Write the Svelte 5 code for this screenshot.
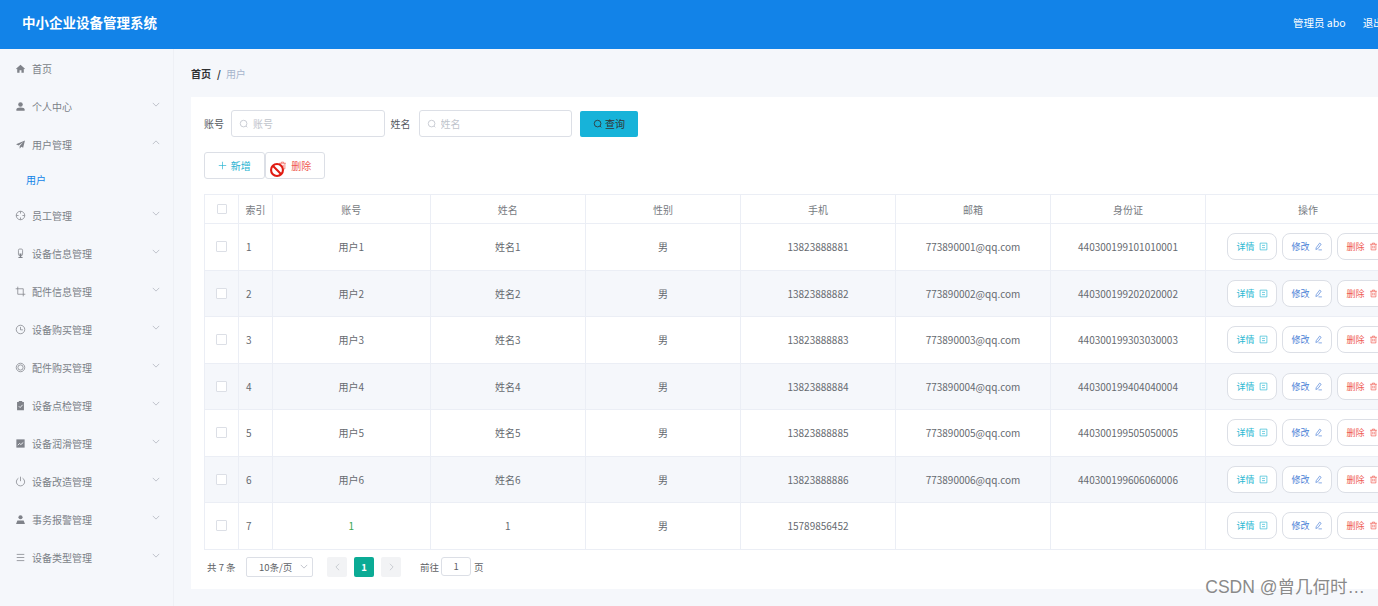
<script lang="ts">
  const menus = [
    { label: "首页", icon: "home" },
    { label: "个人中心", icon: "user", arrow: "down" },
    { label: "用户管理", icon: "plane", arrow: "up", children: ["用户"] },
    { label: "员工管理", icon: "aim", arrow: "down" },
    { label: "设备信息管理", icon: "mic", arrow: "down" },
    { label: "配件信息管理", icon: "crop", arrow: "down" },
    { label: "设备购买管理", icon: "clock", arrow: "down" },
    { label: "配件购买管理", icon: "ring", arrow: "down" },
    { label: "设备点检管理", icon: "clipboard", arrow: "down" },
    { label: "设备润滑管理", icon: "chart", arrow: "down" },
    { label: "设备改造管理", icon: "power", arrow: "down" },
    { label: "事务报警管理", icon: "person", arrow: "down" },
    { label: "设备类型管理", icon: "list", arrow: "down" },
  ];

  const users = [
    { id: 1, account: "用户1", name: "姓名1", phone: "13823888881", email: "773890001@qq.com", card: "440300199101010001" },
    { id: 2, account: "用户2", name: "姓名2", phone: "13823888882", email: "773890002@qq.com", card: "440300199202020002" },
    { id: 3, account: "用户3", name: "姓名3", phone: "13823888883", email: "773890003@qq.com", card: "440300199303030003" },
    { id: 4, account: "用户4", name: "姓名4", phone: "13823888884", email: "773890004@qq.com", card: "440300199404040004" },
    { id: 5, account: "用户5", name: "姓名5", phone: "13823888885", email: "773890005@qq.com", card: "440300199505050005" },
    { id: 6, account: "用户6", name: "姓名6", phone: "13823888886", email: "773890006@qq.com", card: "440300199606060006" },
    { id: 7, account: "1", name: "1", phone: "15789856452", email: "", card: "" },
  ];
</script>

{#snippet menuIcon(name)}
  <svg class="menu-icon" viewBox="0 0 16 16" aria-hidden="true">
    {#if name === "home"}
      <path class="fill" d="M8 2.5 1.5 8.2l.7.8 1-.8V14h3.4v-3.6h2.8V14h3.4V8.2l1 .8.7-.8z" />
    {:else if name === "user"}
      <circle class="fill" cx="8" cy="5" r="3.3" />
      <path class="fill" d="M2 14v-1.5C2 10.5 4 9.3 8 9.3s6 1.200 6 3.200V14z" />
    {:else if name === "plane"}
      <path class="fill" d="M14.500 2 1.500 7.500l3.700 1.800L12 4.500 6.800 10.300V14l2.400-2.700 2.600 1.300z" />
    {:else if name === "aim"}
      <circle class="line" cx="8" cy="8" r="6.200" />
      <path class="line" d="M8 1.800v3.400M8 10.800v3.400M1.800 8h3.400M10.800 8h3.400" />
    {:else if name === "mic"}
      <rect class="line" x="5" y="1.500" width="6" height="9.500" rx="1.800" />
      <path class="fill" d="M6.500 8h3v3h-3zM7 11h2v2H7zM5 13h6v1.500H5z" />
    {:else if name === "crop"}
      <path class="line" d="M4 1v11h11M1 4h11v11" />
    {:else if name === "clock"}
      <circle class="line" cx="8" cy="8" r="6.200" />
      <path class="line" d="M8 4.200V8.500h3.500" />
    {:else if name === "ring"}
      <circle class="line" cx="8" cy="8" r="6.200" />
      <circle class="line" cx="8" cy="8" r="3.800" />
    {:else if name === "clipboard"}
      <path class="fill" d="M5.500 1.500h5V3H13v12H3V3h2.500z" />
      <path class="check" d="m5.500 9 2 2 3.500-4" />
    {:else if name === "chart"}
      <rect class="fill" x="2" y="2" width="12" height="12" />
      <path class="check" d="m4 10.500 2.500-2.500 2 1.500L12 6.500" />
    {:else if name === "power"}
      <path class="line" d="M5 3.200a6 6 0 1 0 6 0M8 1v6.500" />
    {:else if name === "person"}
      <circle class="fill" cx="8" cy="4.800" r="3" />
      <path class="fill" d="M1.500 14.500 3.500 9.500h9l2 5z" />
    {:else if name === "list"}
      <path class="line" d="M2.500 3.500h11M2.500 8h11M2.500 12.500h11" />
    {/if}
  </svg>
{/snippet}

{#snippet chevron(dir)}
  <svg class="chevron" class:up={dir === "up"} viewBox="0 0 10 6" aria-hidden="true">
    <path d="m1 1 4 4 4-4" />
  </svg>
{/snippet}

{#snippet search()}
  <svg class="search-icon" viewBox="0 0 12 12" aria-hidden="true">
    <circle cx="5.500" cy="5.500" r="4" />
    <path d="m8.500 8.500 1.500 1.500" />
  </svg>
{/snippet}

{#snippet trash()}
  <svg class="btn-icon" viewBox="0 0 12 12" aria-hidden="true">
    <path d="M1.500 3h9M4.500 3V1.500h3V3M2.800 3v7.500h6.400V3M5 5v3.500M7 5v3.500" />
  </svg>
{/snippet}

<div class="app">
  <header class="topbar">
    <h1>中小企业设备管理系统</h1>
    <div class="account">
      <span>管理员 abo</span>
      <span class="logout">退出登录</span>
    </div>
  </header>

  <div class="body">
    <nav class="sidebar">
      {#each menus as item}
        <div class="menu-item">
          {@render menuIcon(item.icon)}
          <span>{item.label}</span>
          {#if item.arrow}
            {@render chevron(item.arrow)}
          {/if}
        </div>
        {#if item.children}
          {#each item.children as child}
            <div class="sub-item">{child}</div>
          {/each}
        {/if}
      {/each}
    </nav>

    <main class="content">
      <div class="breadcrumb">
        <b>首页</b>
        <b class="sep">/</b>
        <span>用户</span>
      </div>

      <section class="card">
        <form class="filters">
          <label for="q-account">账号</label>
          <div class="field">
            {@render search()}
            <input id="q-account" placeholder="账号" />
          </div>
          <label for="q-name">姓名</label>
          <div class="field">
            {@render search()}
            <input id="q-name" placeholder="姓名" />
          </div>
          <button class="query" type="button">
            {@render search()}
            查询
          </button>
        </form>

        <div class="actions">
          <button class="action add" type="button">
            <svg class="btn-icon" viewBox="0 0 12 12" aria-hidden="true"><path d="M6 1v10M1 6h10" /></svg>
            新增
          </button>
          <button class="action remove" type="button">
            {@render trash()}
            删除
            <svg class="not-allowed" viewBox="0 0 16 16" aria-hidden="true">
              <circle cx="8" cy="8" r="6.800" />
              <path d="m3.500 3.500 9 9" />
            </svg>
          </button>
        </div>

        <table>
          <colgroup>
            <col style="width: 34px" />
            <col style="width: 34px" />
            <col style="width: 157.500px" />
            <col style="width: 155.500px" />
            <col style="width: 155px" />
            <col style="width: 155px" />
            <col style="width: 155px" />
            <col style="width: 155px" />
            <col style="width: 205px" />
          </colgroup>
          <thead>
            <tr>
              <th><i class="check-box head"></i></th>
              <th>索引</th>
              <th>账号</th>
              <th>姓名</th>
              <th>性别</th>
              <th>手机</th>
              <th>邮箱</th>
              <th>身份证</th>
              <th>操作</th>
            </tr>
          </thead>
          <tbody>
            {#each users as user, i}
              <tr class:striped={i % 2 === 1}>
                <td><i class="check-box"></i></td>
                <td class="index">{user.id}</td>
                <td class:new-row={user.id === 7}>{user.account}</td>
                <td>{user.name}</td>
                <td>男</td>
                <td>{user.phone}</td>
                <td>{user.email}</td>
                <td>{user.card}</td>
                <td class="ops">
                  <div class="op-group">
                    <button class="op detail" type="button">
                      详情
                      <svg class="btn-icon" viewBox="0 0 12 12" aria-hidden="true"><path d="M1.500 1.500h9v9h-9zM4 4.500h4M4 7.500h4" /></svg>
                    </button>
                    <button class="op edit" type="button">
                      修改
                      <svg class="btn-icon" viewBox="0 0 12 12" aria-hidden="true"><path d="M7.500 1.500 9.500 3 5 9 2.500 10 3 7.500zM6 10.500h4.500" /></svg>
                    </button>
                    <button class="op del" type="button">
                      删除
                      {@render trash()}
                    </button>
                  </div>
                </td>
              </tr>
            {/each}
          </tbody>
        </table>

        <div class="pagination">
          <span class="total">共 7 条</span>
          <div class="size">
            <span>10条/页</span>
            {@render chevron("down")}
          </div>
          <button class="page-btn" type="button" aria-label="上一页">
            <svg viewBox="0 0 6 10" aria-hidden="true"><path d="M5 1 1 5l4 4" /></svg>
          </button>
          <button class="page-btn current" type="button">1</button>
          <button class="page-btn" type="button" aria-label="下一页">
            <svg viewBox="0 0 6 10" aria-hidden="true"><path d="m1 1 4 4-4 4" /></svg>
          </button>
          <span class="jump">前往</span>
          <span class="jump-input">1</span>
          <span class="jump-end">页</span>
        </div>
      </section>
    </main>
  </div>

  <div class="watermark">CSDN @曾几何时…</div>
</div>

<style>
  :global(body) {
    margin: 0;
    overflow: hidden;
  }

  .app {
    position: relative;
    width: 1378px;
    height: 606px;
    overflow: hidden;
    background: #f5f7fb;
    color: #606266;
    font-family: "Noto Sans CJK SC", "Liberation Sans", sans-serif;
    font-size: 10px;
  }

  .topbar {
    display: flex;
    align-items: center;
    justify-content: space-between;
    height: 49px;
    padding: 0 0 5px 22px;
    box-sizing: border-box;
    background: #1283e8;
    color: #fff;
  }

  .topbar h1 {
    margin: 0;
    font-size: 13.500px;
    font-weight: 700;
  }

  .account {
    display: flex;
    gap: 17px;
    width: 85px;
    flex-shrink: 0;
    white-space: nowrap;
    font-size: 10.500px;
  }

  .body {
    display: flex;
    height: 557px;
  }

  .sidebar {
    flex: 0 0 173px;
    padding-top: 0;
    border-right: 1px solid #eef0f5;
    box-sizing: content-box;
    color: #7b7f87;
  }

  .menu-item {
    display: flex;
    align-items: center;
    height: 38px;
    padding: 0 13px 0 15px;
  }

  .menu-item span {
    flex: 1;
    margin-left: 6px;
  }

  .sub-item {
    display: flex;
    align-items: center;
    height: 33px;
    padding-left: 26px;
    color: #1283e8;
  }

  .menu-icon {
    width: 11px;
    height: 11px;
  }

  .menu-icon .fill {
    fill: #7f8289;
  }

  .menu-icon .line {
    fill: none;
    stroke: #7f8289;
    stroke-width: 1.100;
  }

  .menu-icon .check {
    fill: none;
    stroke: #f5f7fb;
    stroke-width: 1.300;
  }

  .chevron {
    width: 8px;
    height: 5px;
    margin-top: -4px;
    fill: none;
    stroke: #b4b8c0;
    stroke-width: 1;
  }

  .chevron.up {
    transform: rotate(180deg);
  }

  .content {
    flex: 1;
    min-width: 0;
    padding-left: 17px;
  }

  .breadcrumb {
    display: flex;
    align-items: center;
    gap: 5px;
    height: 48px;
    color: #a6b4cc;
    font-size: 10px;
  }

  .breadcrumb b {
    color: #303133;
    font-weight: 700;
  }

  .breadcrumb .sep {
    margin-left: 1px;
  }

  .card {
    width: 1300px;
    height: 492px;
    padding: 13px;
    box-sizing: border-box;
    background: #fff;
  }

  .filters {
    display: flex;
    align-items: center;
    height: 27px;
  }

  .filters label {
    width: 27px;
    color: #555960;
  }

  .filters .field + label {
    width: 28px;
    margin-left: 6px;
  }

  .field {
    display: flex;
    align-items: center;
    gap: 4px;
    width: 153.500px;
    height: 27px;
    padding-left: 7px;
    box-sizing: border-box;
    border: 1px solid #dcdfe6;
    border-radius: 3px;
  }

  .field input {
    flex: 1;
    min-width: 0;
    padding: 0;
    border: 0;
    outline: 0;
    background: none;
    font: inherit;
  }

  .field input::placeholder {
    color: #c0c4cc;
  }

  .search-icon {
    width: 10px;
    height: 10px;
    fill: none;
    stroke: #c0c4cc;
    stroke-width: 1;
  }

  .query {
    display: flex;
    align-items: center;
    justify-content: center;
    gap: 2px;
    width: 58px;
    height: 26px;
    margin-left: 8px;
    padding: 0;
    border: 0;
    border-radius: 2px;
    background: #17b3d9;
    color: #333;
    font: inherit;
  }

  .query .search-icon {
    stroke: #333;
  }

  .actions {
    display: flex;
    margin-top: 15px;
  }

  .action {
    display: flex;
    align-items: center;
    justify-content: center;
    gap: 4px;
    position: relative;
    width: 60.500px;
    height: 27px;
    padding: 0;
    box-sizing: border-box;
    border: 1px solid #dcdfe6;
    border-radius: 3px;
    background: #fff;
    font: inherit;
  }

  .add {
    color: #26b3d1;
  }

  .remove {
    color: #ef5a50;
  }

  .btn-icon {
    width: 9px;
    height: 9px;
    fill: none;
    stroke: currentColor;
    stroke-width: 0.900;
  }

  .not-allowed {
    position: absolute;
    left: 4px;
    top: 10px;
    width: 14px;
    height: 14px;
    fill: #fff;
    stroke: #e01b12;
    stroke-width: 2.400;
  }

  table {
    width: 1206px;
    margin-top: 15px;
    table-layout: fixed;
    border-collapse: collapse;
    border: 1px solid #ebeef5;
  }

  th,
  td {
    padding: 0;
    border: 1px solid #ebeef5;
    text-align: center;
    font-weight: 400;
    color: #666a70;
  }

  thead tr {
    height: 29px;
  }

  th {
    color: #777b82;
  }

  tbody tr {
    height: 46.500px;
  }

  tr.striped td {
    background: #f5f7fb;
  }

  td.index {
    text-align: left;
    padding-left: 7px;
  }

  td.new-row {
    color: #3aa655;
  }

  .check-box {
    display: block;
    width: 9px;
    height: 9px;
    margin: 0 auto;
    border: 1px solid #dcdfe6;
    border-radius: 1px;
    background: #fff;
  }

  .check-box.head {
    width: 8px;
    height: 8px;
  }

  .op-group {
    display: flex;
    gap: 5px;
    padding-left: 21px;
  }

  .op {
    display: flex;
    align-items: center;
    justify-content: center;
    gap: 4px;
    flex: 0 0 50px;
    height: 27px;
    padding: 0;
    box-sizing: border-box;
    border: 1px solid #dcdfe6;
    border-radius: 8px;
    background: #fff;
    font: inherit;
    font-size: 9px;
  }

  .detail {
    color: #2bb8d2;
  }

  .edit {
    color: #4a7fd6;
  }

  .del {
    color: #ef5a50;
  }

  .pagination {
    display: flex;
    align-items: center;
    height: 20px;
    margin-top: 7px;
    padding-left: 3px;
    font-size: 9.500px;
  }

  .total {
    width: 39px;
  }

  .size {
    display: flex;
    align-items: center;
    justify-content: space-between;
    width: 67px;
    height: 20px;
    padding: 0 4px 0 12px;
    box-sizing: border-box;
    border: 1px solid #dcdfe6;
    border-radius: 2px;
  }

  .size .chevron {
    margin-top: 0;
  }

  .page-btn {
    display: flex;
    align-items: center;
    justify-content: center;
    width: 20px;
    height: 20px;
    margin-right: 7px;
    padding: 0;
    border: 0;
    border-radius: 2px;
    background: #f2f3f5;
    font: inherit;
    font-weight: 700;
  }

  .size + .page-btn {
    margin-left: 14px;
  }

  .page-btn svg {
    width: 5px;
    height: 8px;
    fill: none;
    stroke: #c0c4cc;
    stroke-width: 1;
  }

  .page-btn.current {
    background: #0bab95;
    color: #fff;
  }

  .jump {
    margin-left: 12px;
  }

  .jump-input {
    width: 30px;
    height: 19px;
    margin-left: 2px;
    box-sizing: border-box;
    border: 1px solid #dcdfe6;
    border-radius: 3px;
    color: #606266;
    line-height: 17px;
    text-align: center;
  }

  .jump-end {
    margin-left: 3px;
  }

  .watermark {
    position: absolute;
    right: 13px;
    bottom: 8px;
    color: #8a8a8a;
    font-family: "Liberation Sans", "Noto Sans CJK SC", sans-serif;
    font-size: 17.500px;
    line-height: 22px;
    text-shadow: 0 0 2px #fff;
  }
</style>
